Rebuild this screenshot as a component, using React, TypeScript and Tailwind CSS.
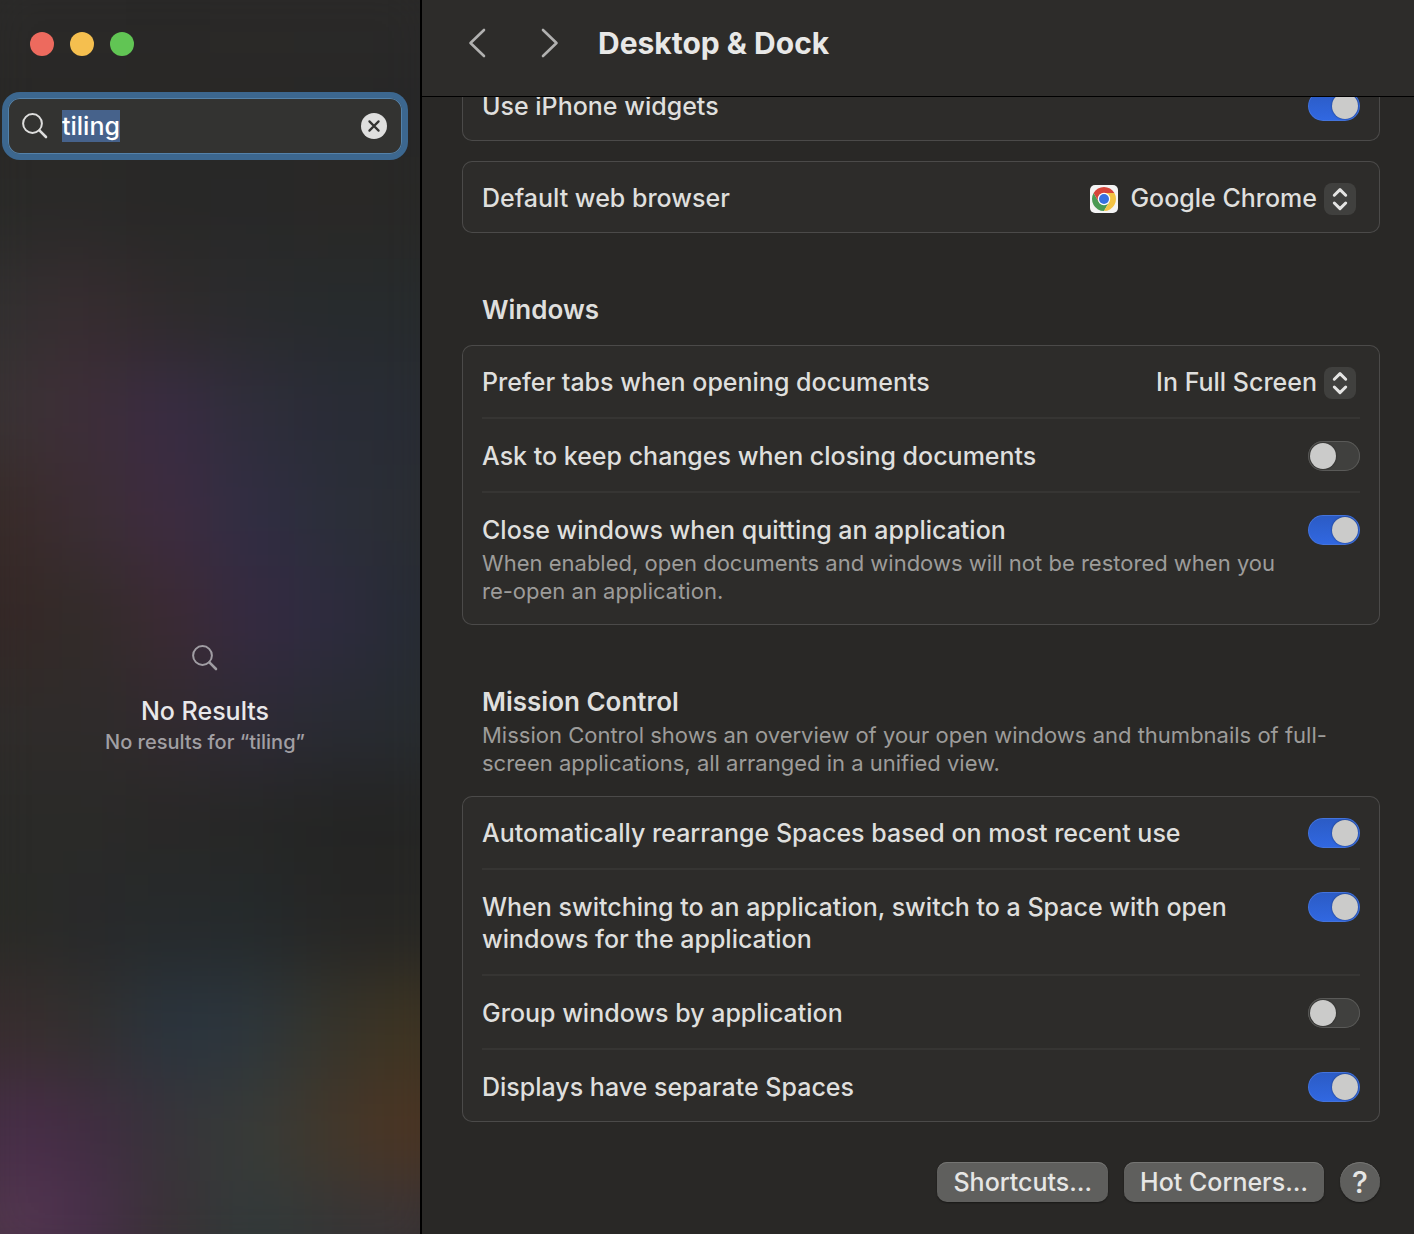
import { useEffect, useRef, useState } from 'react'
import type { ReactNode } from 'react'

// Wallpaper colors bleeding through the translucent sidebar, top to bottom
const wallpaper = [
  ['#2b2a29', '#2a2928', '#292827', '#2a2928', '#2a2928', '#2a2928'],
  ['#292826', '#292826', '#292826', '#292826', '#282827', '#272728'],
  ['#2a2a28', '#2a2928', '#282827', '#282828', '#292826', '#282826'],
  ['#333131', '#372c30', '#2f2b2c', '#2a2b2d', '#272b2d', '#272b2d'],
  ['#3b3435', '#3e2d38', '#392c43', '#2f2d3b', '#292c36', '#282c34'],
  ['#392b28', '#3b2d34', '#3e2c40', '#302d43', '#2b2e39', '#2a2d33'],
  ['#362726', '#322c29', '#3c2a33', '#352a42', '#2d2b3e', '#262c34'],
  ['#302c2a', '#2e2b2a', '#322a2f', '#2e2a36', '#292b33', '#272c30'],
  ['#2a2a28', '#2a2a28', '#292827', '#262726', '#242423', '#252524'],
  ['#2a2b26', '#28292a', '#262a2c', '#252a2c', '#262625', '#272724'],
  ['#3a2d2f', '#32302e', '#2a343e', '#2d363c', '#36342a', '#403521'],
  ['#4a2f4b', '#422c42', '#37343a', '#373b38', '#43372a', '#4f3522'],
  ['#583952', '#4a304d', '#3a3236', '#323b3b', '#363637', '#3b3437'],
]

function Wallpaper() {
  return (
    <svg
      viewBox="0 0 6 13"
      preserveAspectRatio="none"
      className="absolute -top-[4%] -left-[10%] -z-10 h-[108%] w-[120%] blur-[36px]"
      aria-hidden="true"
    >
      {wallpaper.map((row, y) =>
        row.map((color, x) => <rect key={`${x}-${y}`} x={x} y={y} width="1.05" height="1.05" fill={color} />)
      )}
    </svg>
  )
}

function SearchIcon({ className }: { className: string }) {
  return (
    <svg viewBox="0 0 26 26" fill="none" stroke="currentColor" className={className} aria-hidden="true">
      <circle cx="10.5" cy="10.5" r="9.4" strokeWidth="2" />
      <path d="M17.4 17.4 24 24" strokeWidth="2.6" strokeLinecap="round" />
    </svg>
  )
}

function ChromeIcon() {
  return (
    <svg viewBox="0 0 28 28" className="mt-[3px] mr-3 size-7 shrink-0" aria-hidden="true">
      <rect width="28" height="28" rx="5" fill="#f4f4f4" />
      <path d="M3.61 8 8.8 17 14 20 19.2 17 14 26A12 12 0 0 1 3.61 8Z" fill="#4a9a54" />
      <path d="M14 8H24.39A12 12 0 0 1 14 26L19.2 17Z" fill="#f3c344" />
      <path d="M3.61 8A12 12 0 0 1 24.39 8H14L8.8 17Z" fill="#d5453a" />
      <circle cx="14" cy="14" r="6.2" fill="#fff" />
      <circle cx="14" cy="14" r="5" fill="#3671e0" />
    </svg>
  )
}

function Card({ children }: { children: ReactNode }) {
  return (
    <div className="rounded-[10px] bg-[#2d2c2a] px-5 inset-ring inset-ring-[#4b4a49]">
      {children}
    </div>
  )
}

function Row({ id, label, note, children }: { id: string; label: string; note?: string; children: ReactNode }) {
  return (
    <div className="flex items-start justify-between gap-6 border-b-2 border-[#363533] pt-[21px] pb-[19px] last:border-b-0">
      <div>
        <label htmlFor={id} className="block leading-8">{label}</label>
        {note && <p className="mt-[3px] mb-px text-[22px] leading-7 font-normal text-[#9d9c9a]">{note}</p>}
      </div>
      {children}
    </div>
  )
}

function Toggle({ id, on = false }: { id: string; on?: boolean }) {
  return (
    <input
      id={id}
      type="checkbox"
      role="switch"
      defaultChecked={on}
      className="mt-px h-[30px] w-[52px] shrink-0 appearance-none rounded-full bg-[#40403e] p-0.5 inset-ring inset-ring-[#5a5a58] before:block before:size-[26px] before:rounded-full before:bg-[#cbcbca] before:shadow-[0_0_2px_rgba(0,0,0,0.5)] checked:bg-linear-to-b checked:from-[#2b5bc4] checked:to-[#3168e2] checked:inset-ring-[#4474dc] checked:before:translate-x-[22px]"
    />
  )
}

function PopUp({ id, options, icon }: { id: string; options: string[]; icon?: ReactNode }) {
  return (
    <div className="mr-1 flex shrink-0 items-start">
      {icon}
      <div className="relative">
        <select id={id} className="block h-8 [field-sizing:content] appearance-none bg-transparent pr-[39px] leading-8 outline-none">
          {options.map((option) => (
            <option key={option}>{option}</option>
          ))}
        </select>
        <span className="pointer-events-none absolute top-px right-0 flex size-8 items-center justify-center rounded-lg bg-[#40403e]">
          <svg viewBox="0 0 32 32" fill="none" stroke="#e4e4e3" strokeWidth="3" strokeLinecap="round" strokeLinejoin="round" className="size-8" aria-hidden="true">
            <path d="M10.3 12.2 16 6.6l5.7 5.6M10.3 20 16 25.6l5.7-5.6" />
          </svg>
        </span>
      </div>
    </div>
  )
}

function Sidebar() {
  const [query, setQuery] = useState('tiling')
  const input = useRef<HTMLInputElement>(null)

  useEffect(() => {
    input.current?.focus()
    input.current?.select()
  }, [])

  return (
    <aside className="relative isolate flex w-[422px] shrink-0 flex-col overflow-hidden border-r-2 border-black bg-[#282827] pr-[18px] pl-2">
      <Wallpaper />

      <div className="flex gap-4 pt-8 pl-[22px]">
        <button aria-label="Close" className="size-6 rounded-full bg-[#ed6a5e]" />
        <button aria-label="Minimize" className="size-6 rounded-full bg-[#f5bf4f]" />
        <button aria-label="Zoom" className="size-6 rounded-full bg-[#61c554]" />
      </div>

      <div className="mt-[42px] flex h-14 items-center rounded-xl bg-[#333331] pr-[15px] pl-[14px] ring-6 ring-[#3c678f] inset-ring inset-ring-[#5482aa]">
        <SearchIcon className="size-[26px] shrink-0 text-[#dededd]" />
        <input
          ref={input}
          aria-label="Search"
          value={query}
          onChange={(e) => setQuery(e.target.value)}
          className="ml-[14px] h-8 min-w-0 flex-1 bg-transparent leading-8 text-white outline-none selection:bg-[#46628b] selection:text-white"
        />
        <button aria-label="Clear search" onClick={() => setQuery('')} className="shrink-0">
          <svg viewBox="0 0 26 26" className="size-[26px]" aria-hidden="true">
            <circle cx="13" cy="13" r="13" fill="#dfdfde" />
            <path d="m8.4 8.4 9.2 9.2m0-9.2-9.2 9.2" stroke="#333331" strokeWidth="2.2" strokeLinecap="round" />
          </svg>
        </button>
      </div>

      <div className="flex flex-1 flex-col items-center justify-center pt-[14px] text-center">
        <SearchIcon className="size-[26px] text-[#a09da3]" />
        <h2 className="mt-6 leading-8 text-[#e9e8ea]">No Results</h2>
        <p className="text-xl leading-[30px] text-[#a19fa3]">No results for “tiling”</p>
      </div>
    </aside>
  )
}

export default function App() {
  return (
    <div className="flex min-h-screen bg-[#292826] font-['Inter',sans-serif] text-[25px] font-medium text-[#dfdfdd]">
      <Sidebar />

      <main className="flex min-w-0 flex-1 flex-col">
        <header className="relative z-10 flex h-[97px] shrink-0 items-center border-b border-black bg-[#2d2c2a] pb-[10px] pl-[46px]">
          <button aria-label="Back" className="text-[#b1b1b0]">
            <svg viewBox="0 0 18 30" fill="none" stroke="currentColor" strokeWidth="2.6" strokeLinecap="round" strokeLinejoin="round" className="h-[30px] w-[18px]">
              <path d="M16 2 2.5 15 16 28" />
            </svg>
          </button>
          <button aria-label="Forward" className="ml-[55px] text-[#b1b1b0]">
            <svg viewBox="0 0 18 30" fill="none" stroke="currentColor" strokeWidth="2.6" strokeLinecap="round" strokeLinejoin="round" className="h-[30px] w-[18px]">
              <path d="M2 2 15.5 15 2 28" />
            </svg>
          </button>
          <h1 className="ml-[39px] text-[30px] leading-10 font-bold text-[#e8e8e7]">Desktop &amp; Dock</h1>
        </header>

        {/* Pane is scrolled, so the first card sits partly under the title bar */}
        <div className="-mt-7 pr-[34px] pb-8 pl-10">
          <Card>
            <Row id="iphone-widgets" label="Use iPhone widgets">
              <Toggle id="iphone-widgets" on />
            </Row>
          </Card>

          <div className="mt-5">
            <Card>
              <Row id="browser" label="Default web browser">
                <PopUp id="browser" options={['Google Chrome', 'Safari']} icon={<ChromeIcon />} />
              </Row>
            </Card>
          </div>

          <section className="pt-[61px]">
            <h2 className="mb-[19px] pl-5 text-[26px] leading-8 font-semibold">Windows</h2>
            <Card>
              <Row id="prefer-tabs" label="Prefer tabs when opening documents">
                <PopUp id="prefer-tabs" options={['In Full Screen', 'Never', 'Always']} />
              </Row>
              <Row id="keep-changes" label="Ask to keep changes when closing documents">
                <Toggle id="keep-changes" />
              </Row>
              <Row
                id="close-windows"
                label="Close windows when quitting an application"
                note="When enabled, open documents and windows will not be restored when you re-open an application."
              >
                <Toggle id="close-windows" on />
              </Row>
            </Card>
          </section>

          <section className="pt-[61px]">
            <div className="mb-[19px] px-5">
              <h2 className="text-[26px] leading-8 font-semibold">Mission Control</h2>
              <p className="mt-[3px] text-[22px] leading-7 font-normal text-[#9d9c9a]">
                Mission Control shows an overview of your open windows and thumbnails of full-screen applications, all arranged in a unified view.
              </p>
            </div>
            <Card>
              <Row id="rearrange" label="Automatically rearrange Spaces based on most recent use">
                <Toggle id="rearrange" on />
              </Row>
              <Row id="switch-space" label="When switching to an application, switch to a Space with open windows for the application">
                <Toggle id="switch-space" on />
              </Row>
              <Row id="group-windows" label="Group windows by application">
                <Toggle id="group-windows" />
              </Row>
              <Row id="separate-spaces" label="Displays have separate Spaces">
                <Toggle id="separate-spaces" on />
              </Row>
            </Card>
          </section>

          <div className="mt-10 flex justify-end gap-4">
            <button className="h-10 rounded-[10px] bg-[#5f5f5d] px-4 leading-10 text-[#e6e6e5] shadow-[0_1px_2px_rgba(0,0,0,0.4),inset_0_1px_0_#757573]">Shortcuts…</button>
            <button className="h-10 rounded-[10px] bg-[#5f5f5d] px-4 leading-10 text-[#e6e6e5] shadow-[0_1px_2px_rgba(0,0,0,0.4),inset_0_1px_0_#757573]">Hot Corners…</button>
            <button aria-label="Help" className="size-10 rounded-full bg-[#5f5f5d] text-[30px] leading-10 text-[#e6e6e5] shadow-[0_1px_2px_rgba(0,0,0,0.4),inset_0_1px_0_#757573]">?</button>
          </div>
        </div>
      </main>
    </div>
  )
}
